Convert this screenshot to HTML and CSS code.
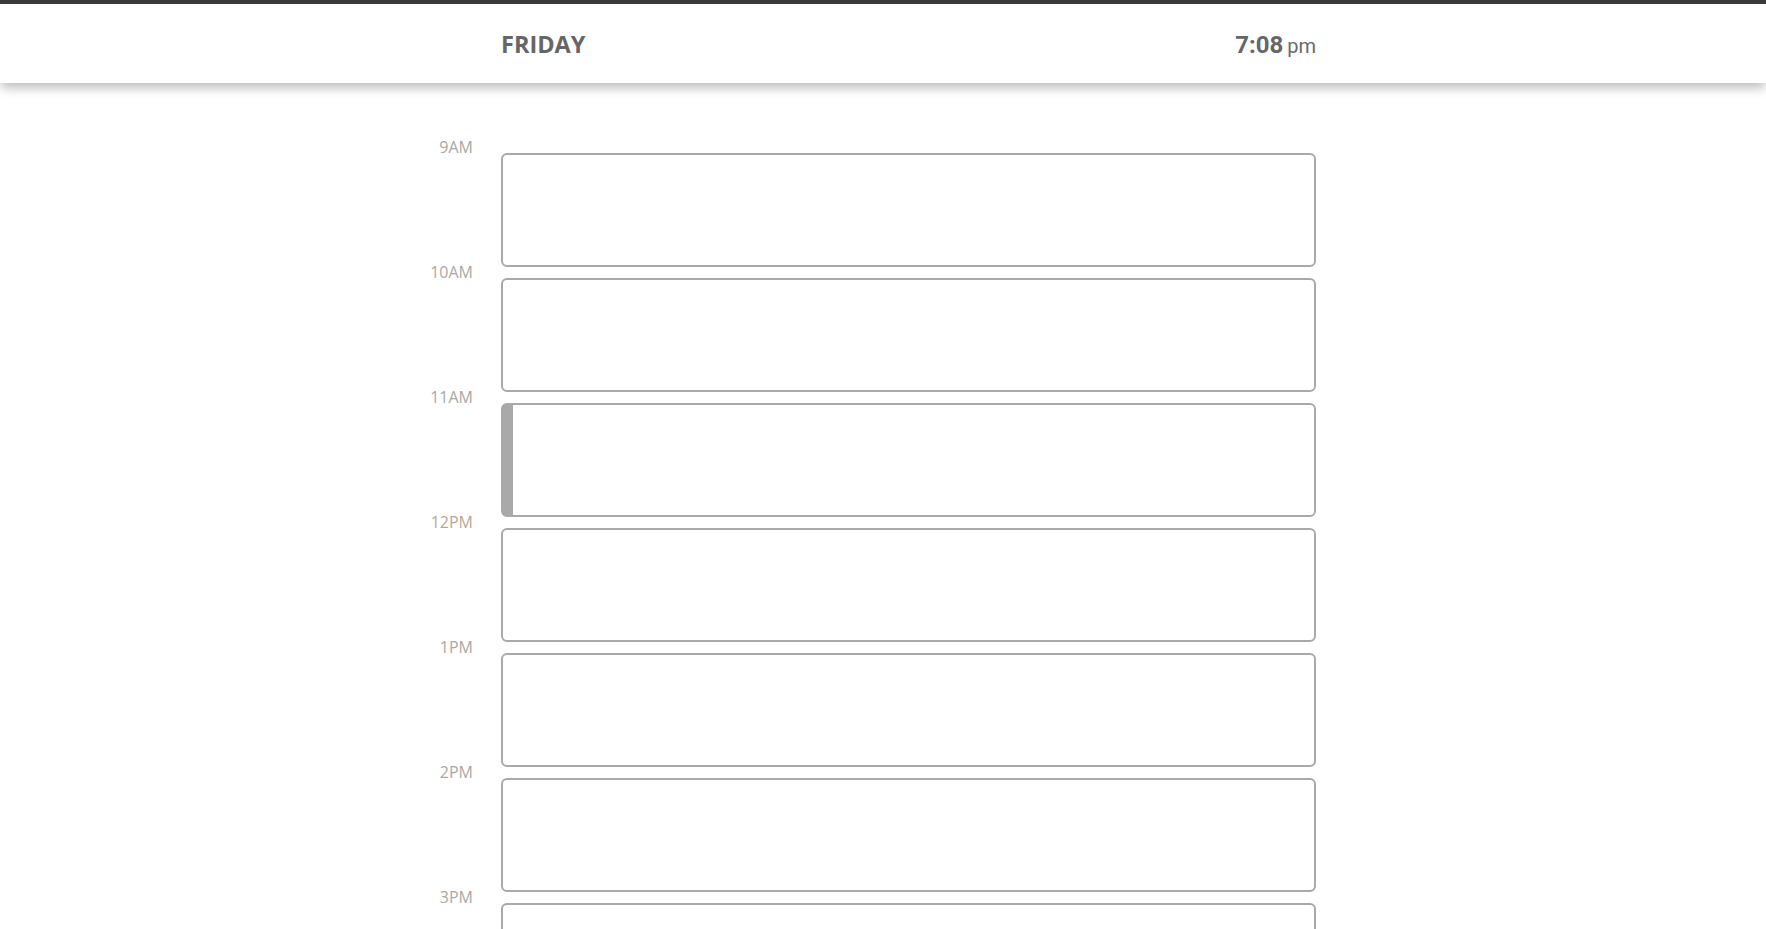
FILE: index.html
```html
<!DOCTYPE html>
<html lang="en">
<head>
<meta charset="utf-8">
<title>Day Planner</title>
<link rel="stylesheet" href="styles.css">
</head>
<body>
<header class="topbar">
  <div class="topbar-inner">
    <div class="day">FRIDAY</div>
    <div class="clock"><span class="clock-time">7:08</span> <span class="clock-ampm">pm</span></div>
  </div>
</header>
<main class="planner">
  <div class="hour">9AM</div><div class="slot"></div>
  <div class="hour">10AM</div><div class="slot"></div>
  <div class="hour">11AM</div><div class="slot slot-marked"></div>
  <div class="hour hour-tan">12PM</div><div class="slot"></div>
  <div class="hour">1PM</div><div class="slot"></div>
  <div class="hour">2PM</div><div class="slot"></div>
  <div class="hour">3PM</div><div class="slot"></div>
  <div class="hour">4PM</div><div class="slot"></div>
  <div class="hour">5PM</div><div class="slot"></div>
</main>
</body>
</html>
```
FILE: styles.css
```css
* { box-sizing: border-box; }
html, body { margin: 0; padding: 0; background: #fff; }
body { font-family: "Open Sans", "Liberation Sans", sans-serif; }

.topbar {
  height: 83px;
  border-top: 4px solid #3a3a3a;
  background: #fff;
  box-shadow: 0 6px 10px -1px rgba(0, 0, 0, 0.26);
  padding-top: 24px;
}
.topbar-inner {
  width: 815px;
  margin-left: calc(50% - 382px);
  display: flex;
  justify-content: space-between;
  align-items: baseline;
  height: 32px;
  line-height: 32px;
  color: #666;
}
.day {
  font-family: "Open Sans", sans-serif;
  font-weight: 700;
  font-size: 23.5px;
}
.clock { font-family: Roboto, "Liberation Sans", sans-serif; line-height: 32px; }
.clock-time { font-weight: 700; font-size: 24px; line-height: 1; }
.clock-ampm { font-weight: 400; font-size: 20px; line-height: 1; color: #6a6a6a; }

.planner {
  width: 915px;
  margin: 70px 0 0 calc(50% - 482px);
  display: grid;
  grid-template-columns: 72px 815px;
  column-gap: 28px;
  row-gap: 11px;
  grid-auto-rows: 114px;
}
.hour {
  text-align: right;
  font-size: 16px;
  line-height: 20px;
  margin-top: -16px;
  color: #aba7a3;
}
.hour-tan { color: #b5a897; }
.slot {
  border: 2px solid #a9a9a9;
  border-radius: 6px;
  background: #fff;
}
.slot-marked { border-left-width: 12px; }
```
